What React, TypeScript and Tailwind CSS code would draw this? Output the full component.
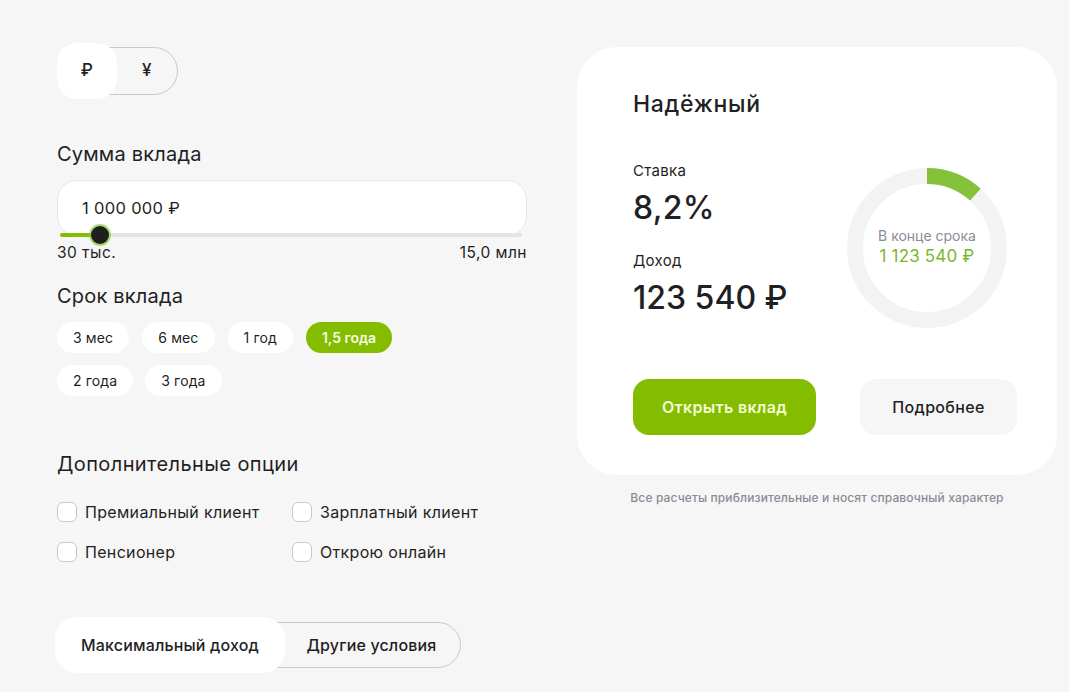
import React from "react";

const font = { fontFamily: "Inter, 'Noto Sans', 'Liberation Sans', sans-serif" };

function Chip({ label, active }: { label: string; active?: boolean }) {
  return (
    <div
      className={
        active
          ? "h-[31px] px-[16px] rounded-full bg-[#84bd00] text-[#f4fbe4] text-[14px] font-semibold flex items-center tracking-normal"
          : "h-[31px] px-[16px] rounded-full bg-white text-[#1f1f24] text-[14px] flex items-center tracking-[0.01em]"
      }
    >
      {label}
    </div>
  );
}

function Check({ label }: { label: string }) {
  return (
    <div className="flex items-center h-[24px]">
      <div className="w-[20px] h-[20px] rounded-[6px] border border-[#c8c8d2] bg-white" />
      <span className="ml-[8px] text-[16px] text-[#1f1f24]">{label}</span>
    </div>
  );
}

export default function App() {
  const circ = 2 * Math.PI * 72;
  const arc = circ * 0.117;
  return (
    <div
      className="w-full h-[692px] overflow-hidden bg-[#f6f6f6] flex pl-[57px] pt-[43px] gap-[50px] tracking-[0.02em]"
      style={font}
    >
      {/* Left column */}
      <div className="w-[470px] flex flex-col">
        {/* currency toggle */}
        <div className="h-[56px] flex items-center">
          <div className="h-[48px] w-[121px] rounded-full border border-[#c9c9d3] flex items-center">
            <div className="h-[56px] w-[60px] -ml-px rounded-[20px] bg-white flex items-center justify-center text-[17px] font-medium text-[#1f1f24]">
              ₽
            </div>
            <div className="flex-1 flex items-center justify-center text-[17px] font-medium text-[#1f1f24]">
              ¥
            </div>
          </div>
        </div>

        <div className="mt-[41px] text-[20px] leading-[28px] text-[#1f1f24] tracking-[0.01em]">Сумма вклада</div>

        <div className="mt-[12px] relative h-[56px] rounded-[20px] bg-white border border-[#e8e8ec]">
          <div className="absolute left-[24px] top-[16px] text-[16.5px] leading-[22px] text-[#1f1f24]">
            1 000 000 ₽
          </div>
          <div className="absolute left-[2px] right-[4px] bottom-[-2px] h-[4px] rounded-full bg-[#e3e3e9]" />
          <div className="absolute left-[2px] w-[42px] bottom-[-2px] h-[4px] rounded-full bg-[#84bd00]" />
          <div className="absolute left-[33px] top-[45px] w-[18px] h-[18px] rounded-full bg-[#1e1f1e] ring-2 ring-[#8ccc3c]/70" />
        </div>

        <div className="mt-[7px] flex justify-between text-[15.5px] leading-[20px] text-[#1f1f24] tracking-[0.03em]">
          <span>30 тыс.</span>
          <span>15,0 млн</span>
        </div>

        <div className="mt-[19px] text-[20px] leading-[28px] text-[#1f1f24] tracking-[0.01em]">Срок вклада</div>

        <div className="mt-[12px] flex gap-[13px]">
          <Chip label="3 мес" />
          <Chip label="6 мес" />
          <Chip label="1 год" />
          <Chip label="1,5 года" active />
        </div>
        <div className="mt-[12px] flex gap-[12px]">
          <Chip label="2 года" />
          <Chip label="3 года" />
        </div>

        <div className="mt-[54px] text-[20px] leading-[28px] text-[#1f1f24] tracking-[0.02em]">Дополнительные опции</div>

        <div className="mt-[22px] grid grid-cols-[235px_1fr] gap-y-[16px]">
          <Check label="Премиальный клиент" />
          <Check label="Зарплатный клиент" />
          <Check label="Пенсионер" />
          <Check label="Открою онлайн" />
        </div>

        <div className="mt-[53px] h-[56px] flex items-center">
          <div className="h-[46px] w-[406px] -ml-[2px] rounded-full border border-[#c9c9d3] flex items-center">
            <div className="h-[56px] w-[230px] -ml-px rounded-[22px] bg-white flex items-center justify-center text-[16px] font-medium text-[#1f1f24] tracking-[0.01em]">
              Максимальный доход
            </div>
            <div className="flex-1 flex items-center justify-center pr-[2px] text-[16px] font-medium text-[#1f1f24] tracking-[0.01em]">
              Другие условия
            </div>
          </div>
        </div>
      </div>

      {/* Right column */}
      <div className="w-[480px] pt-[4px] flex flex-col">
        <div className="h-[428px] rounded-[40px] bg-white pt-[42px] pl-[56px] pr-[40px] pb-[40px] flex flex-col">
          <div className="h-[290px] flex">
            <div className="flex-1 flex flex-col text-[#1f1f24]">
              <div className="text-[23px] leading-[30px] font-medium tracking-[0.03em]">Надёжный</div>
              <div className="mt-[41px] text-[15px] leading-[22px]">Ставка</div>
              <div className="mt-[6px] text-[32px] leading-[40px] font-medium tracking-[0.01em]">8,2%</div>
              <div className="mt-[22px] text-[15px] leading-[22px]">Доход</div>
              <div className="mt-[6px] text-[32px] leading-[40px] font-medium tracking-normal">123 540 ₽</div>
            </div>
            <div className="mt-[79px] mr-[10px] relative w-[160px] h-[160px]">
              <svg width="160" height="160" viewBox="0 0 160 160" className="absolute inset-0">
                <circle cx="80" cy="80" r="72" fill="none" stroke="#f3f3f3" strokeWidth="16" />
                <circle
                  cx="80"
                  cy="80"
                  r="72"
                  fill="none"
                  stroke="#85c23b"
                  strokeWidth="16"
                  strokeDasharray={`${arc} ${circ}`}
                  transform="rotate(-90 80 80)"
                />
              </svg>
              <div className="absolute inset-0 flex flex-col items-center justify-center pb-[4px] tracking-normal">
                <div className="text-[14px] leading-[20px] text-[#8b8b96]">В конце срока</div>
                <div className="text-[17px] leading-[20px] text-[#7ab72f] tracking-[0.01em]">1 123 540 ₽</div>
              </div>
            </div>
          </div>
          <div className="h-[56px] flex justify-between">
            <div className="w-[183px] h-[56px] rounded-[16px] bg-[#84bd00] flex items-center justify-center text-[16px] font-semibold text-[#f2fbd2]">
              Открыть вклад
            </div>
            <div className="w-[157px] h-[56px] rounded-[16px] bg-[#f6f6f7] flex items-center justify-center text-[16px] font-medium text-[#1f1f24]">
              Подробнее
            </div>
          </div>
        </div>
        <div className="mt-[15px] text-center text-[12px] leading-[16px] font-medium text-[#8a8a96] tracking-[0.01em]">
          Все расчеты приблизительные и носят справочный характер
        </div>
      </div>
    </div>
  );
}
